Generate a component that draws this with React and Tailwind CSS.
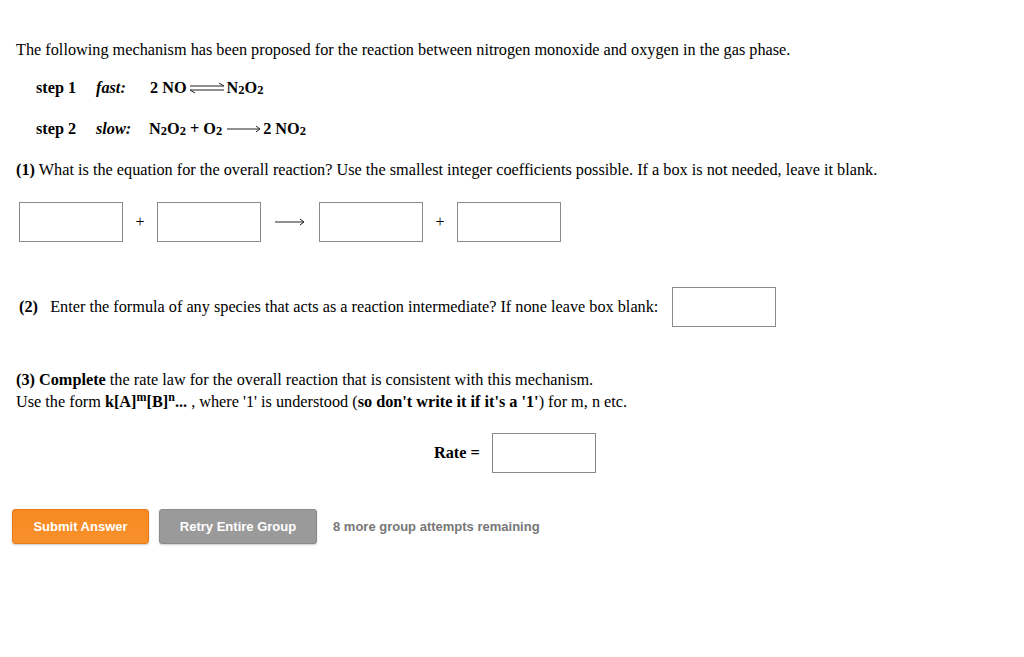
import React from 'react'

function Box({ className = '' }) {
  return <div className={`h-[40px] w-[104px] border border-[#8a8a8a] bg-white ${className}`} />
}

function Sub({ children }) {
  return <sub className="text-[12.5px] relative top-[1px] align-baseline">{children}</sub>
}

function Arrow({ w = 32 }) {
  return (
    <svg width={w} height="10" viewBox={`0 0 ${w} 10`} className="inline-block mx-[2px]">
      <line x1="0" y1="5" x2={w - 1} y2="5" stroke="#222" strokeWidth="1" />
      <path d={`M${w - 5} 2 L${w - 1} 5 L${w - 5} 8`} fill="none" stroke="#222" strokeWidth="1" />
    </svg>
  )
}

function EqArrow() {
  return (
    <svg width="36" height="12" viewBox="0 0 36 12" className="inline-block mx-[2px]">
      <line x1="1" y1="4" x2="35" y2="4" stroke="#222" strokeWidth="1" />
      <path d="M30 1 L35 4" fill="none" stroke="#222" strokeWidth="1" />
      <line x1="1" y1="8" x2="35" y2="8" stroke="#222" strokeWidth="1" />
      <path d="M1 8 L6 11" fill="none" stroke="#222" strokeWidth="1" />
    </svg>
  )
}

export default function App() {
  return (
    <div className="w-[1024px] h-[657px] bg-white text-[16.25px] text-black font-['Liberation_Serif',serif] relative">
      <div className="pt-[40px] pl-[16px]">
        <p className="leading-[20px]">
          The following mechanism has been proposed for the reaction between nitrogen monoxide and oxygen in the gas phase.
        </p>

        <div className="pl-[20px] mt-[18px] font-bold leading-[20px]">
          <div className="flex items-center">
            <span className="w-[60px]">step 1</span>
            <span className="w-[54px] italic">fast:</span>
            <span>2 NO</span>
            <EqArrow />
            <span>N<Sub>2</Sub>O<Sub>2</Sub></span>
          </div>
          <div className="flex items-center mt-[21px]">
            <span className="w-[60px]">step 2</span>
            <span className="w-[53px] italic">slow:</span>
            <span>N<Sub>2</Sub>O<Sub>2</Sub> + O<Sub>2</Sub></span>
            <span className="ml-[3px] flex"><Arrow w={34} /></span>
            <span>2 NO<Sub>2</Sub></span>
          </div>
        </div>

        <p className="mt-[21px] leading-[20px]">
          <b>(1)</b> What is the equation for the overall reaction? Use the smallest integer coefficients possible. If a box is not needed, leave it blank.
        </p>

        <div className="flex items-center mt-[22px] pl-[3px]">
          <Box />
          <span className="w-[34px] text-center text-[16px]">+</span>
          <Box />
          <span className="w-[58px] flex justify-center"><Arrow w={30} /></span>
          <Box />
          <span className="w-[34px] text-center text-[16px]">+</span>
          <Box />
        </div>

        <div className="flex items-center mt-[45px] pl-[3px]">
          <span className="leading-[20px]"><b>(2)</b>&nbsp;&nbsp; Enter the formula of any species that acts as a reaction intermediate? If none leave box blank:</span>
          <Box className="ml-[14px]" />
        </div>

        <div className="mt-[42px] leading-[22px]">
          <p><b>(3) Complete</b> the rate law for the overall reaction that is consistent with this mechanism.</p>
          <p>
            Use the form <b>k[A]<sup className="text-[12px]">m</sup>[B]<sup className="text-[12px]">n</sup>...</b> , where '1' is understood (<b>so don't write it if it's a '1'</b>) for m, n etc.
          </p>
        </div>

        <div className="flex items-center mt-[20px] pl-[418px]">
          <span className="font-bold w-[58px]">Rate =</span>
          <Box />
        </div>

        <div className="flex items-center mt-[36px] -ml-[4px] font-['Liberation_Sans',Arial,sans-serif] text-[13px] font-bold">
          <button className="h-[35px] w-[137px] rounded-[3px] border border-[#e9781a] bg-gradient-to-b from-[#f78a22] to-[#f8902a] text-white shadow-[0_1px_2px_rgba(0,0,0,0.2)]">
            Submit Answer
          </button>
          <button className="ml-[10px] h-[35px] w-[158px] rounded-[3px] border border-[#8c8c8c] bg-[#9a9a9a] text-white shadow-[0_1px_2px_rgba(0,0,0,0.2)]">
            Retry Entire Group
          </button>
          <span className="ml-[16px] text-[#777] text-[13px]">8 more group attempts remaining</span>
        </div>
      </div>
    </div>
  )
}
